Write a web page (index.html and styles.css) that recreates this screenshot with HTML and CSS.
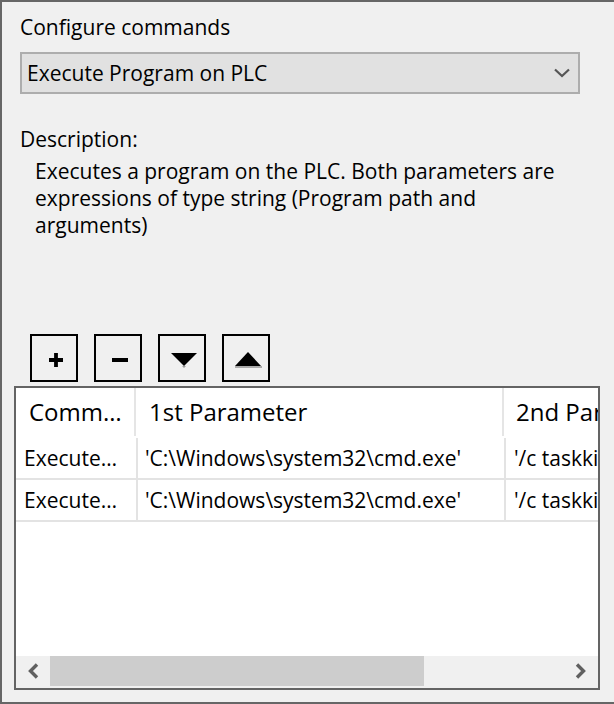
FILE: index.html
```html
<!DOCTYPE html>
<html lang="en">
<head>
<meta charset="utf-8">
<title>Configure commands</title>
<link rel="stylesheet" href="styles.css">
</head>
<body>
<div class="window">
  <div class="label">Configure commands</div>
  <div class="combo">
    <span class="combo-text">Execute Program on PLC</span>
    <svg class="combo-chevron" width="16" height="10" viewBox="0 0 16 10"><polyline points="1,1.5 8,8 15,1.5" fill="none" stroke="#555" stroke-width="2.2"/></svg>
  </div>
  <div class="desc-label">Description:</div>
  <p class="desc">Executes a program on the PLC. Both parameters are expressions of type string (Program path and arguments)</p>
  <div class="toolbar">
    <button class="tool" title="Add">
      <svg width="18" height="18" viewBox="0 0 18 18"><path d="M9 2v14M2 9h14" stroke="#000" stroke-width="3.8"/></svg>
    </button>
    <button class="tool" title="Remove">
      <svg width="18" height="18" viewBox="0 0 18 18"><path d="M1 9h16" stroke="#000" stroke-width="4"/></svg>
    </button>
    <button class="tool" title="Move down">
      <svg width="26" height="16" viewBox="0 0 26 16"><polygon points="0,1 26,1 13,14" fill="#000"/><polygon points="11,14 15,14 13,16" fill="#999"/></svg>
    </button>
    <button class="tool" title="Move up">
      <svg width="28" height="17" viewBox="0 0 28 17"><polygon points="14,0 27,14 1,14" fill="#000"/><rect x="1" y="14" width="27" height="2" fill="#aaa"/></svg>
    </button>
  </div>
  <div class="grid">
    <div class="viewport">
      <div class="head">
        <div class="hcell c1">Command</div>
        <div class="hcell c2">1st Parameter</div>
        <div class="hcell c3">2nd Parameter</div>
      </div>
      <div class="row">
        <div class="cell c1">Execute Program on PLC</div>
        <div class="cell c2">'C:\Windows\system32\cmd.exe'</div>
        <div class="cell c3">'/c taskkill /f /im program.exe'</div>
      </div>
      <div class="row">
        <div class="cell c1">Execute Program on PLC</div>
        <div class="cell c2">'C:\Windows\system32\cmd.exe'</div>
        <div class="cell c3">'/c taskkill /f /im program.exe'</div>
      </div>
    </div>
    <div class="hscroll">
      <span class="arrow"><svg width="12" height="16" viewBox="0 0 12 16"><polyline points="10,1.5 3.5,8 10,14.5" fill="none" stroke="#606060" stroke-width="3.4"/></svg></span>
      <span class="track"><span class="thumb"></span></span>
      <span class="arrow"><svg width="12" height="16" viewBox="0 0 12 16"><polyline points="2,1.5 8.5,8 2,14.5" fill="none" stroke="#606060" stroke-width="3.4"/></svg></span>
    </div>
  </div>
</div>
</body>
</html>
```
FILE: styles.css
```css
html, body {
  margin: 0;
  padding: 0;
}

body {
  background: #f0f0f0;
  font-family: "Open Sans", "Noto Sans", sans-serif;
  font-size: 21px;
  color: #000;
}

.window {
  height: 704px;
  box-sizing: border-box;
  border: 2px solid #666;
  border-right: none;
  padding-top: 12px;
  display: flex;
  flex-direction: column;
}

.label {
  margin-left: 18px;
  line-height: 27px;
}

.combo {
  margin: 11px 0 0 18px;
  width: 560px;
  height: 42px;
  box-sizing: border-box;
  border: 2px solid #adadad;
  background: #e1e1e1;
  display: flex;
  align-items: center;
  justify-content: space-between;
  padding: 0 8px 0 5px;
}

.combo-text {
  line-height: 27px;
}

.combo-chevron {
  display: block;
}

.desc-label {
  margin: 32px 0 0 18px;
  line-height: 27px;
}

.desc {
  margin: 5px 0 0 33px;
  width: 535px;
  line-height: 27px;
}

.toolbar {
  margin: 95px 0 0 28px;
  display: flex;
  gap: 16px;
}

.tool {
  width: 48px;
  height: 48px;
  box-sizing: border-box;
  border: 2px solid #000;
  background: #f0f0f0;
  padding: 4px 0 0 3px;
  margin: 0;
  display: flex;
  align-items: center;
  justify-content: center;
}

.tool svg {
  display: block;
}

.grid {
  margin: 4px 0 0 12px;
  width: 586px;
  height: 304px;
  box-sizing: border-box;
  border: 2px solid #646464;
  display: flex;
  flex-direction: column;
}

.viewport {
  flex: 1;
  overflow: hidden;
  background: #fff;
}

.head {
  display: flex;
  padding-bottom: 2px;
  width: 800px;
}

.hcell {
  height: 48px;
  line-height: 48px;
  font-size: 24px;
  box-sizing: border-box;
  border-right: 2px solid #e5e5e5;
  white-space: nowrap;
  overflow: hidden;
  text-overflow: ellipsis;
}

.hcell.c1 { width: 120px; padding: 0 4px 0 13px; }
.hcell.c2 { width: 368px; padding-left: 13px; }
.hcell.c3 { width: 300px; padding-left: 12px; text-overflow: clip; }

.row {
  display: flex;
  width: 800px;
  height: 42px;
  box-sizing: border-box;
  border-bottom: 2px solid #e3e3e3;
}

.cell {
  line-height: 40px;
  box-sizing: border-box;
  border-right: 2px solid #e3e3e3;
  white-space: nowrap;
  overflow: hidden;
  text-overflow: ellipsis;
}

.cell.c1 { width: 122px; padding: 0 16px 0 8px; }
.cell.c2 { width: 368px; padding-left: 7px; }
.cell.c3 { width: 300px; padding-left: 8px; text-overflow: clip; }

.hscroll {
  flex: none;
  height: 32px;
  display: flex;
  background: #f0f0f0;
}

.arrow {
  width: 34px;
  height: 30px;
  display: flex;
  align-items: center;
  justify-content: center;
}

.arrow svg {
  display: block;
}

.track {
  flex: 1;
  display: block;
}

.thumb {
  display: block;
  width: 374px;
  height: 30px;
  background: #cdcdcd;
}
```
